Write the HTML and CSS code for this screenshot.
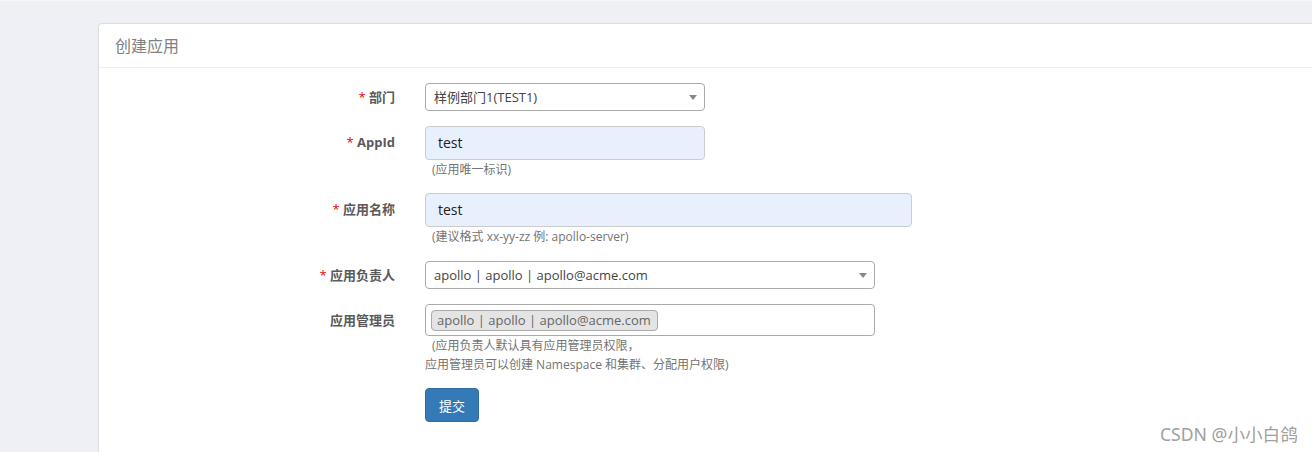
FILE: index.html
```html
<!DOCTYPE html>
<html lang="zh">
<head>
<meta charset="utf-8">
<title>创建应用</title>
<link rel="stylesheet" href="styles.css">
</head>
<body>
<div class="page">
  <div class="panel">
    <div class="panel-heading">创建应用</div>
    <div class="panel-body">
      <form class="form">
        <div class="row">
          <label class="label"><span class="req">*</span> 部门</label>
          <div class="ctrl">
            <div class="select w280"><span>样例部门1(TEST1)</span><i class="arrow"></i></div>
          </div>
        </div>
        <div class="row">
          <label class="label label-input"><span class="req">*</span> AppId</label>
          <div class="ctrl">
            <div class="input filled w280">test</div>
            <div class="help indent">(应用唯一标识)</div>
          </div>
        </div>
        <div class="row">
          <label class="label label-input"><span class="req">*</span> 应用名称</label>
          <div class="ctrl">
            <div class="input filled w487">test</div>
            <div class="help indent help-2">(建议格式 xx-yy-zz 例: apollo-server)</div>
          </div>
        </div>
        <div class="row">
          <label class="label"><span class="req">*</span> 应用负责人</label>
          <div class="ctrl">
            <div class="select w450"><span>apollo | apollo | apollo@acme.com</span><i class="arrow"></i></div>
          </div>
        </div>
        <div class="row">
          <label class="label label-input">应用管理员</label>
          <div class="ctrl">
            <div class="multi w450"><span class="tag">apollo | apollo | apollo@acme.com</span></div>
            <div class="help help-multi"><span class="indent">(应用负责人默认具有应用管理员权限，</span><br>应用管理员可以创建 Namespace 和集群、分配用户权限)</div>
          </div>
        </div>
        <div class="row">
          <div class="label"></div>
          <div class="ctrl">
            <button type="button" class="btn">提交</button>
          </div>
        </div>
      </form>
    </div>
  </div>
  <div class="watermark">CSDN @小小白鸽</div>
</div>
</body>
</html>
```
FILE: styles.css
```css
* { box-sizing: border-box; }
html, body {
  margin: 0;
  padding: 0;
  overflow: hidden;
}
body {
  background: #eff0f5;
  font-family: "Open Sans", "Noto Sans CJK SC", sans-serif;
  font-size: 13px;
  color: #333;
  border-top: 1px solid #f7f7fa;
}
.page {
  position: relative;
  width: 1312px;
  height: 451px;
  padding-top: 22px;
  padding-left: 98px;
}
.panel {
  width: 1230px;
  height: 600px;
  background: #fff;
  border: 1px solid #dcdcdf;
  border-radius: 4px;
}
.panel-heading {
  height: 44px;
  padding: 0 16px;
  line-height: 44px;
  font-size: 16px;
  color: #808080;
  border-bottom: 1px solid #ededed;
}
.panel-body {
  padding-top: 15px;
}
.row {
  display: flex;
  gap: 30px;
  margin-bottom: 15px;
}
.label {
  width: 296px;
  flex: none;
  text-align: right;
  font-weight: bold;
  color: #5a5a5a;
  font-size: 13px;
  line-height: 28px;
}
.label-input { line-height: 32px; }
.req { color: #e00; font-weight: normal; }
.ctrl { display: flex; flex-direction: column; align-items: flex-start; }
.w280 { width: 280px; }
.w450 { width: 450px; }
.w487 { width: 487px; }
.select {
  position: relative;
  height: 28px;
  border: 1px solid #aaa;
  border-radius: 4px;
  padding: 0 8px;
  line-height: 27px;
  font-size: 13px;
  color: #444;
}
.arrow {
  position: absolute;
  right: 7px;
  top: 11px;
  width: 0;
  height: 0;
  border-left: 4px solid transparent;
  border-right: 4px solid transparent;
  border-top: 5px solid #888;
}
.input {
  height: 34px;
  border: 1px solid #ccc;
  border-radius: 4px;
  padding: 0 12px;
  line-height: 32px;
  font-size: 14px;
  color: #222;
}
.filled { background: #e8f0fe; }
.multi {
  height: 32px;
  border: 1px solid #aaa;
  border-radius: 4px;
  padding: 5px 5px 0;
}
.tag {
  display: inline-block;
  height: 21px;
  line-height: 19px;
  padding: 0 6px 0 5px;
  background: #e4e4e4;
  border: 1px solid #aaa;
  border-radius: 4px;
  font-size: 13px;
  color: #666;
}
.help {
  font-size: 12px;
  color: #737373;
  line-height: 20px;
  margin-bottom: -2px;
}
.help-2 { margin-bottom: -1px; }
.help-multi { line-height: 19px; margin-top: 0; margin-bottom: -1px; }
.indent { padding-left: 7px; }
.btn {
  width: 54px;
  height: 34px;
  background: #337ab7;
  border: 1px solid #2e6da4;
  border-radius: 4px;
  color: #fff;
  font-family: "Open Sans", "Noto Sans CJK SC", sans-serif;
  font-size: 13px;
  padding: 0;
}
.watermark {
  position: absolute;
  left: 1160px;
  top: 421px;
  font-family: "Noto Sans", "Noto Sans CJK SC", sans-serif;
  font-size: 17.6px;
  line-height: 24px;
  color: #a0a0a0;
}
```
